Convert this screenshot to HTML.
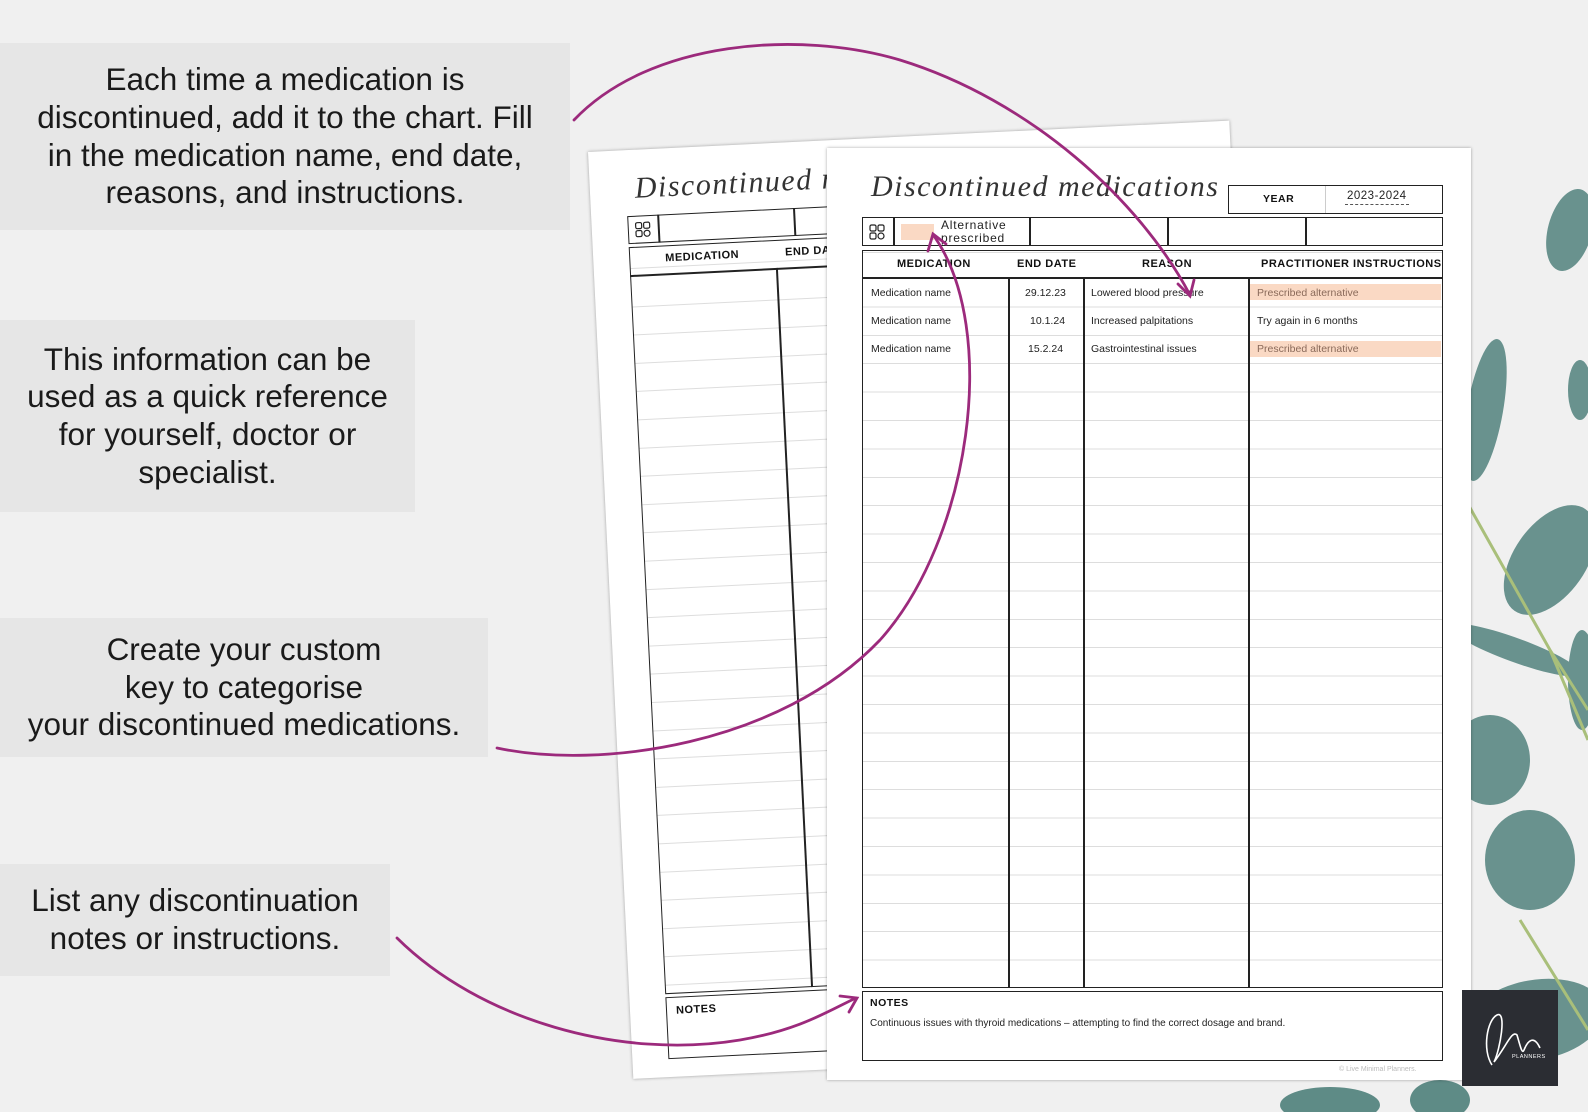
<!DOCTYPE html>
<html><head><meta charset="utf-8"><style>
*{margin:0;padding:0;box-sizing:border-box}
body{width:1588px;height:1112px;overflow:hidden;background:#f0f0f0;font-family:"Liberation Sans",sans-serif;position:relative}
.cb{position:absolute;left:0;background:#e6e6e6;color:#1a1a1a;font-size:31.5px;line-height:37.7px;text-align:center;display:flex;align-items:center;justify-content:center;white-space:nowrap}
.pg{position:absolute;background:#fff;box-shadow:0 0 3px rgba(0,0,0,.35)}
.abs{position:absolute}
.hd{font-weight:bold;font-size:11px;letter-spacing:.5px;color:#111}
.cell{font-size:10.5px;color:#222}
.peach{background:#fad9c4}
.ttl{font-family:'Liberation Serif',serif;font-style:italic;font-size:30px;color:#333;letter-spacing:1.5px}
</style></head><body>

<!-- leaves -->
<svg class="abs" style="left:1460px;top:180px" width="128" height="932">
<g fill="#5e8b86" opacity=".92">
<ellipse cx="110" cy="50" rx="22" ry="42" transform="rotate(15 110 50)"/>
<ellipse cx="120" cy="210" rx="12" ry="30"/>
<ellipse cx="25" cy="230" rx="18" ry="72" transform="rotate(10 25 230)"/>
<ellipse cx="90" cy="380" rx="36" ry="62" transform="rotate(35 90 380)"/>
<ellipse cx="55" cy="470" rx="12" ry="70" transform="rotate(-70 55 470)"/>
<ellipse cx="30" cy="580" rx="40" ry="45"/>
<ellipse cx="70" cy="680" rx="45" ry="50"/>
<ellipse cx="75" cy="840" rx="70" ry="40" transform="rotate(-10 75 840)"/>
<ellipse cx="122" cy="500" rx="14" ry="50"/>
</g>
<path d="M0 310 L90 470 L128 560 M90 470 L128 530 M60 740 L128 850" stroke="#a9bf7a" stroke-width="3" fill="none"/>
</svg>
<svg class="abs" style="left:1270px;top:1075px" width="200" height="37"><g fill="#5e8b86"><ellipse cx="60" cy="30" rx="50" ry="18"/><ellipse cx="170" cy="25" rx="30" ry="20"/></g></svg>

<!-- back page -->
<div class="pg" style="left:588px;top:152px;width:642px;height:928px;transform-origin:0 0;transform:rotate(-2.8deg)">
  <div class="abs ttl" style="left:45px;top:22px">Discontinued m</div>
  <div class="abs" style="left:36px;top:66px;width:570px;height:28px;border:1.5px solid #222"></div>
  <div class="abs" style="left:66px;top:66px;width:1.5px;height:28px;background:#222"></div>
  <div class="abs" style="left:202px;top:66px;width:1.5px;height:28px;background:#222"></div>
  <svg class="abs" style="left:43px;top:72px" width="16" height="16"><g fill="none" stroke="#222" stroke-width="1.2"><rect x="1" y="1" width="6" height="6" rx="1.5"/><rect x="9" y="1" width="6" height="6" rx="1.5"/><rect x="1" y="9" width="6" height="6" rx="1.5"/><circle cx="12" cy="12" r="3"/></g></svg>
  <div class="abs" style="left:36px;top:97px;width:570px;height:748px;border:1.5px solid #222;background:repeating-linear-gradient(to bottom,transparent 0,transparent 27.3px,#ddd 27.3px,#ddd 28.3px);background-position:0 31px"></div>
  <div class="abs" style="left:36px;top:125px;width:570px;height:1.5px;background:#222"></div>
  <div class="abs" style="left:182px;top:125px;width:1.5px;height:720px;background:#222"></div>
  <div class="abs hd" style="left:72px;top:104px">MEDICATION</div>
  <div class="abs hd" style="left:192px;top:104px">END DATE</div>
  <div class="abs" style="left:36px;top:848px;width:570px;height:62px;border:1.5px solid #222"></div>
  <div class="abs hd" style="left:46px;top:856px">NOTES</div>
</div>

<!-- front page -->
<div class="pg" style="left:827px;top:148px;width:644px;height:932px">
  <div class="abs ttl" style="left:44px;top:22px">Discontinued medications</div>
  <div class="abs" style="left:401px;top:37px;width:215px;height:29px;border:1.5px solid #222"></div>
  <div class="abs" style="left:498px;top:38px;width:1px;height:27px;background:#ccc"></div>
  <div class="abs hd" style="left:436px;top:45px;font-size:10.5px">YEAR</div>
  <div class="abs" style="left:518px;top:42px;font-size:11.5px;color:#222;letter-spacing:.5px;border-bottom:1px dashed #555;padding:0 2px 2px">2023-2024</div>
  <!-- key row -->
  <div class="abs" style="left:35px;top:69px;width:581px;height:29px;border:1.5px solid #222"></div>
  <div class="abs" style="left:66px;top:69px;width:1.5px;height:29px;background:#222"></div>
  <div class="abs" style="left:202px;top:69px;width:1.5px;height:29px;background:#222"></div>
  <div class="abs" style="left:340px;top:69px;width:1.5px;height:29px;background:#222"></div>
  <div class="abs" style="left:478px;top:69px;width:1.5px;height:29px;background:#222"></div>
  <svg class="abs" style="left:42px;top:76px" width="16" height="16"><g fill="none" stroke="#222" stroke-width="1.2"><rect x="1" y="1" width="6" height="6" rx="1.5"/><rect x="9" y="1" width="6" height="6" rx="1.5"/><rect x="1" y="9" width="6" height="6" rx="1.5"/><circle cx="12" cy="12" r="3"/></g></svg>
  <div class="abs peach" style="left:74px;top:76px;width:33px;height:16px"></div>
  <div class="abs" style="left:114px;top:71px;font-size:12px;line-height:13px;letter-spacing:.8px;color:#222">Alternative<br>prescribed</div>
  <!-- table -->
  <div class="abs" style="left:35px;top:102px;width:581px;height:738px;border:1.5px solid #222;background:repeating-linear-gradient(to bottom,transparent 0,transparent 27.4px,#ddd 27.4px,#ddd 28.4px);background-position:0 28px"></div>
  <div class="abs" style="left:35px;top:129px;width:581px;height:1.5px;background:#222"></div>
  <div class="abs" style="left:181px;top:130px;width:1.5px;height:710px;background:#222"></div>
  <div class="abs" style="left:256px;top:130px;width:1.5px;height:710px;background:#222"></div>
  <div class="abs" style="left:421px;top:130px;width:1.5px;height:710px;background:#222"></div>
  <div class="abs hd" style="left:70px;top:110px">MEDICATION</div>
  <div class="abs hd" style="left:190px;top:110px">END DATE</div>
  <div class="abs hd" style="left:315px;top:110px">REASON</div>
  <div class="abs hd" style="left:434px;top:110px">PRACTITIONER INSTRUCTIONS</div>
  <div class="abs peach" style="left:423px;top:136px;width:191px;height:16px"></div>
  <div class="abs peach" style="left:423px;top:193px;width:191px;height:16px"></div>
  <div class="abs cell" style="left:44px;top:139px">Medication name</div>
  <div class="abs cell" style="left:44px;top:167px">Medication name</div>
  <div class="abs cell" style="left:44px;top:195px">Medication name</div>
  <div class="abs cell" style="left:198px;top:139px">29.12.23</div>
  <div class="abs cell" style="left:203px;top:167px">10.1.24</div>
  <div class="abs cell" style="left:201px;top:195px">15.2.24</div>
  <div class="abs cell" style="left:264px;top:139px">Lowered blood pressure</div>
  <div class="abs cell" style="left:264px;top:167px">Increased palpitations</div>
  <div class="abs cell" style="left:264px;top:195px">Gastrointestinal issues</div>
  <div class="abs cell" style="left:430px;top:139px;color:#8a6a5a">Prescribed alternative</div>
  <div class="abs cell" style="left:430px;top:167px">Try again in 6 months</div>
  <div class="abs cell" style="left:430px;top:195px;color:#8a6a5a">Prescribed alternative</div>
  <!-- notes -->
  <div class="abs" style="left:35px;top:843px;width:581px;height:70px;border:1.5px solid #222"></div>
  <div class="abs hd" style="left:43px;top:849px;font-size:10.5px">NOTES</div>
  <div class="abs cell" style="left:43px;top:870px;font-size:10px">Continuous issues with thyroid medications – attempting to find the correct dosage and brand.</div>
  <div class="abs" style="left:512px;top:918px;font-size:7px;color:#bbb">© Live Minimal Planners.</div>
</div>

<!-- logo -->
<div class="abs" style="left:1462px;top:990px;width:96px;height:96px;background:#2b2d33">
  <svg width="96" height="96"><path d="M30 75 C20 60 25 30 35 25 C45 20 38 60 32 72 C45 55 50 40 55 45 C58 55 60 65 62 60 C66 50 72 45 78 58" stroke="#fff" stroke-width="1.6" fill="none"/></svg>
  <div class="abs" style="left:50px;top:64px;font-size:5.5px;color:#fff;letter-spacing:.5px">PLANNERS</div>
</div>

<!-- callouts -->
<div class="cb" style="top:43px;width:570px;height:187px">Each time a medication is<br>discontinued, add it to the chart. Fill<br>in the medication name, end date,<br>reasons, and instructions.</div>
<div class="cb" style="top:320px;width:415px;height:192px">This information can be<br>used as a quick reference<br>for yourself, doctor or<br>specialist.</div>
<div class="cb" style="top:618px;width:488px;height:139px">Create your custom<br>key to categorise<br>your discontinued medications.</div>
<div class="cb" style="top:864px;width:390px;height:112px">List any discontinuation<br>notes or instructions.</div>

<!-- arrows -->
<svg class="abs" style="left:0;top:0" width="1588" height="1112">
<g stroke="#9c2a7c" stroke-width="2.8" fill="none" stroke-linecap="round">
<path d="M574 120 C650 40 800 30 900 60 C1030 100 1140 200 1190 295"/>
<path d="M1178 284 L1190 296 L1194 280"/>
<path d="M497 748 C600 770 780 745 880 640 C970 540 1000 330 934 236"/>
<path d="M928 251 L933 234 L946 244"/>
<path d="M397 938 C480 1020 620 1060 740 1040 C800 1030 830 1010 856 998"/>
<path d="M840 996 L857 998 L849 1012"/>
</g>
</svg>
</body></html>
